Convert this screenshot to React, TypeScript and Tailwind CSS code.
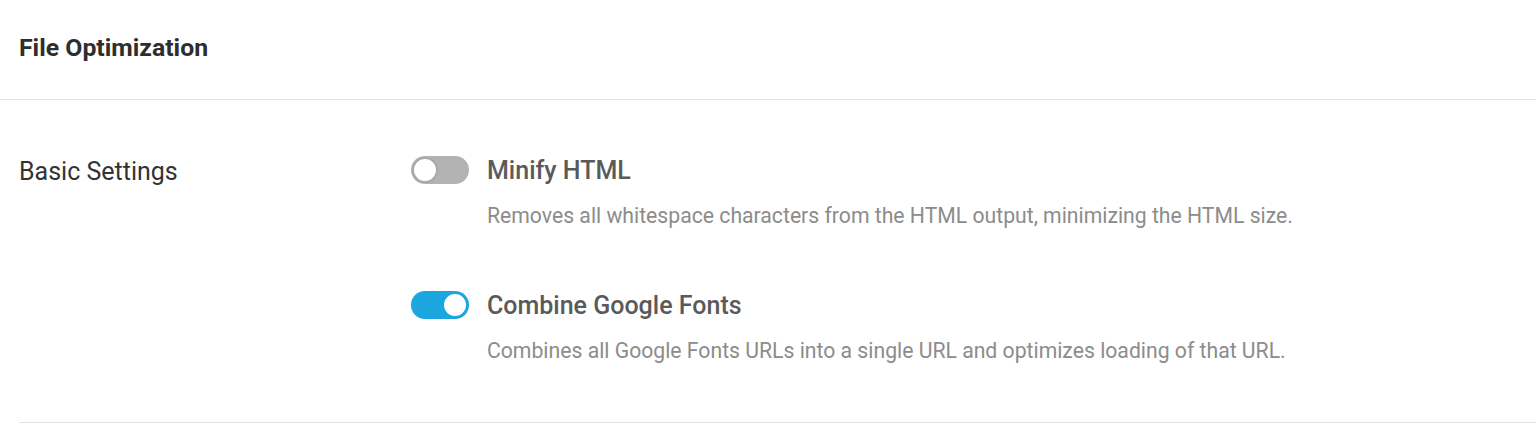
import React from "react";

function Toggle({ on }: { on: boolean }) {
  return (
    <div
      className={
        "relative w-[58px] h-[28px] rounded-full shrink-0 " +
        (on ? "bg-[#1ba6df]" : "bg-[#b3b3b3]")
      }
    >
      <div
        className={
          "absolute top-[1px] w-[26px] h-[26px] rounded-full bg-white border-2 " +
          (on ? "right-[1px] border-[#1ba6df]" : "left-[1px] border-[#a8a8a8]")
        }
      />
    </div>
  );
}

function Setting({
  on,
  title,
  desc,
}: {
  on: boolean;
  title: string;
  desc: string;
}) {
  return (
    <div className="flex flex-col">
      <div className="flex items-center gap-[18px] h-[30px]">
        <Toggle on={on} />
        <div className="text-[25px] font-medium text-[#5a5a5a] leading-[30px] mt-[1px]">{title}</div>
      </div>
      <div className="pl-[76px] mt-[18px] text-[21.2px] text-[#8c8c8c] leading-[26px]">{desc}</div>
    </div>
  );
}

export default function App() {
  return (
    <div
      className="w-[1536px] h-[423px] bg-white overflow-hidden"
      style={{ fontFamily: "Roboto, 'Liberation Sans', sans-serif" }}
    >
      <div className="h-[100px] border-b border-[#e3e3e3] flex items-center px-[19px]">
        <h1 className="text-[24.8px] font-bold text-[#2e2e2e] mt-[-4px]">File Optimization</h1>
      </div>
      <div className="pl-[19px]">
        <div className="flex pt-[55px] h-[323px] border-b border-[#e3e3e3]">
          <div className="w-[392px] shrink-0 text-[25px] text-[#333333] leading-[30px] mt-[2px]">
            Basic Settings
          </div>
          <div className="flex flex-col gap-[61px]">
            <Setting
              on={false}
              title="Minify HTML"
              desc="Removes all whitespace characters from the HTML output, minimizing the HTML size."
            />
            <Setting
              on={true}
              title="Combine Google Fonts"
              desc="Combines all Google Fonts URLs into a single URL and optimizes loading of that URL."
            />
          </div>
        </div>
      </div>
    </div>
  );
}
